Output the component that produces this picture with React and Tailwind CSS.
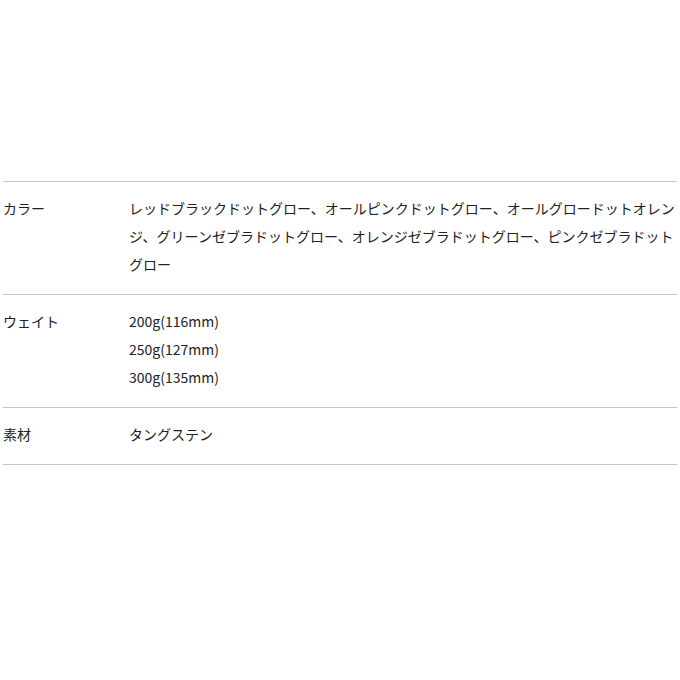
import React from 'react';

const specs = [
  {
    label: 'カラー',
    lines: [
      'レッドブラックドットグロー、オールピンクドットグロー、オールグロードットオレンジ、グリーンゼブラドットグロー、オレンジゼブラドットグロー、ピンクゼブラドットグロー',
    ],
  },
  { label: 'ウェイト', lines: ['200g(116mm)', '250g(127mm)', '300g(135mm)'] },
  { label: '素材', lines: ['タングステン'] },
];

export default function App() {
  return (
    <div
      className="w-[680px] h-[680px] bg-white pt-[181px] px-[3px] text-[14px] leading-[28px] text-[#222222]"
      style={{ fontFamily: '"Noto Sans CJK JP", "Noto Sans", sans-serif' }}
    >
      <div className="border-t border-[#c8c8c8]">
        {specs.map((row) => (
          <div key={row.label} className="flex border-b border-[#c8c8c8] pt-[12px] pb-[16px]">
            <div className="w-[126px] shrink-0">{row.label}</div>
            <div className="flex-1 break-all">
              {row.lines.map((l, i) => (
                <div key={i}>{l}</div>
              ))}
            </div>
          </div>
        ))}
      </div>
    </div>
  );
}
